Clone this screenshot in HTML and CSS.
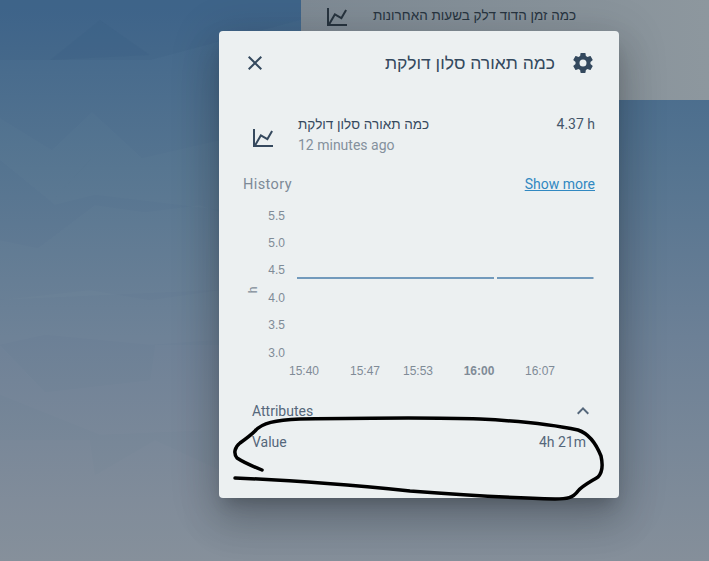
FILE: index.html
```html
<!DOCTYPE html>
<html lang="en">
<head>
<meta charset="utf-8">
<title>History dialog</title>
<link rel="stylesheet" href="styles.css">
</head>
<body>
<svg class="facets" viewBox="0 0 709 561" preserveAspectRatio="none" aria-hidden="true">
  <polygon class="f-dark" points="0,0 709,0 709,22 470,30 300,20 150,60 0,60"/>
  <polygon class="f-dark" points="50,60 100,20 150,55 90,58"/>
  <polygon class="f-light" points="0,118 52,150 92,112 142,158 220,140 220,210 95,195 55,205 0,160"/>
  <polygon class="f-dark" points="90,160 55,198 92,158"/>
  <polygon class="f-light" points="0,240 38,248 95,205 145,212 200,205 220,212 220,290 0,300"/>
  <polygon class="f-light" points="0,300 90,290 150,300 220,290 220,340 150,345 45,335 0,345"/>
  <polygon class="f-light" points="0,345 45,392 150,380 155,345 220,345 220,430 100,435 0,395"/>
  <polygon class="f-light" points="0,440 90,440 95,475 155,440 220,470 220,561 0,561"/>
</svg>
<section class="back-card">
  <svg class="icon back-icon" viewBox="0 0 24 24"><path d="M16 11.78 20.24 4.45 21.97 5.45 16.74 14.5 10.23 10.75 5.46 19H22V21H2V3H4V17.54L9.5 8Z"/></svg>
  <span class="back-title" dir="rtl">כמה זמן הדוד דלק בשעות האחרונות</span>
</section>
<main class="dialog">
  <header class="dialog-head">
    <svg class="icon close" viewBox="0 0 24 24"><path d="M19 6.41 17.59 5 12 10.59 6.41 5 5 6.41 10.59 12 5 17.59 6.41 19 12 13.41 17.59 19 19 17.59 13.41 12Z"/></svg>
    <h1 class="dialog-title" dir="rtl">כמה תאורה סלון דולקת</h1>
    <svg class="icon gear" viewBox="0 0 24 24"><path d="M12 15.5A3.5 3.5 0 0 1 8.500 12 3.500 3.500 0 0 1 12 8.500 3.500 3.500 0 0 1 15.500 12 3.500 3.500 0 0 1 12 15.500M19.430 12.970C19.470 12.650 19.500 12.330 19.500 12S19.470 11.340 19.430 11L21.540 9.370C21.730 9.220 21.780 8.950 21.660 8.730L19.660 5.270C19.540 5.050 19.270 4.960 19.050 5.050L16.560 6.050C16.040 5.660 15.500 5.320 14.870 5.070L14.500 2.420C14.460 2.180 14.250 2 14 2H10C9.750 2 9.540 2.180 9.500 2.420L9.130 5.070C8.500 5.320 7.960 5.660 7.440 6.050L4.950 5.050C4.730 4.960 4.460 5.050 4.340 5.270L2.340 8.730C2.210 8.950 2.270 9.220 2.460 9.370L4.570 11C4.530 11.340 4.500 11.670 4.500 12S4.530 12.650 4.570 12.970L2.460 14.630C2.270 14.780 2.210 15.050 2.340 15.270L4.340 18.730C4.460 18.950 4.730 19.030 4.950 18.950L7.440 17.940C7.960 18.340 8.500 18.680 9.130 18.930L9.500 21.580C9.540 21.820 9.750 22 10 22H14C14.250 22 14.460 21.820 14.500 21.580L14.870 18.930C15.500 18.670 16.040 18.340 16.560 17.940L19.050 18.950C19.270 19.030 19.540 18.950 19.660 18.730L21.660 15.270C21.780 15.050 21.730 14.780 21.540 14.630Z"/></svg>
  </header>
  <section class="state-row">
    <svg class="icon state-icon" viewBox="0 0 24 24"><path d="M16 11.78 20.240 4.450 21.970 5.450 16.740 14.500 10.230 10.750 5.460 19H22V21H2V3H4V17.540L9.500 8Z"/></svg>
    <div class="state-info">
      <div class="state-name" dir="rtl">כמה תאורה סלון דולקת</div>
      <div class="state-time">12 minutes ago</div>
    </div>
    <div class="state-value">4.37 h</div>
  </section>
  <section class="history-head">
    <span class="history-label">History</span>
    <a class="show-more" href="#">Show more</a>
  </section>
  <svg class="chart" viewBox="0 0 400 190" aria-label="History chart">
    <g class="y-labels">
      <text x="66" y="22">5.5</text>
      <text x="66" y="49">5.0</text>
      <text x="66" y="76">4.5</text>
      <text x="66" y="104">4.0</text>
      <text x="66" y="131">3.5</text>
      <text x="66" y="159">3.0</text>
    </g>
    <text class="unit" transform="translate(38 92) rotate(-90)">h</text>
    <path class="line" d="M78 80H275M278 80H374.500"/>
    <g class="x-labels">
      <text x="85" y="177">15:40</text>
      <text x="146" y="177">15:47</text>
      <text x="199" y="177">15:53</text>
      <text class="major" x="260" y="177">16:00</text>
      <text x="321" y="177">16:07</text>
    </g>
  </svg>
  <section class="attrs">
    <div class="attrs-head">
      <span>Attributes</span>
      <svg class="icon chevron" viewBox="0 0 24 24"><path d="M7.410 15.410 12 10.830 16.590 15.410 18 14 12 8 6 14Z"/></svg>
    </div>
    <div class="attr-row">
      <span>Value</span>
      <span>4h 21m</span>
    </div>
  </section>
</main>
<svg class="scribble" viewBox="0 0 709 561" aria-hidden="true">
  <path d="M262 470 C252 466 243 462 237 458 C233 453 235 447 240 443 C247 438 251 435 255 431 C262 423 275 420 300 419 C360 418 430 417 480 419 C520 421 555 425 578 430 C590 434 597 446 601 456 C603 465 602 473 598 477 C590 482 582 486 578 491 C573 498 567 499 555 499 C510 498 450 494 410 491 C370 487 310 481 235 478"/>
</svg>
</body>
</html>
```

FILE: styles.css
```css
* { box-sizing: border-box; }
html, body { margin: 0; height: 100%; }
body {
  width: 709px;
  height: 561px;
  overflow: hidden;
  position: relative;
  background: linear-gradient(180deg, #40668b 0%, #557490 30%, #6c8096 60%, #858f9a 100%);
  font-family: Roboto, "Liberation Sans", "Noto Sans", sans-serif;
  color: #36495e;
}
.facets { position: absolute; inset: 0; width: 709px; height: 561px; }
.f-dark { fill: rgba(40, 80, 110, .08); }
.f-light { fill: rgba(255, 255, 255, .015); }
.icon { fill: currentColor; display: block; flex: none; }
.back-card {
  position: absolute;
  left: 301px;
  top: 0;
  width: 408px;
  height: 100px;
  background: linear-gradient(90deg, #7e8a94, #8d979e);
  padding: 3px 0 0 24px;
  display: flex;
  align-items: flex-start;
  gap: 24px;
  color: #27343f;
}
.back-icon { width: 24px; height: 24px; margin-top: 2px; }
.back-title { font-size: 13.5px; line-height: 26px; font-family: "Liberation Sans", sans-serif; }
.dialog {
  position: absolute;
  left: 219px;
  top: 31px;
  width: 400px;
  height: 467px;
  background: #ecf0f1;
  border-radius: 4px;
  box-shadow: 0 11px 15px -7px rgba(0,0,0,.2), 0 24px 38px 3px rgba(0,0,0,.14), 0 9px 46px 8px rgba(0,0,0,.12);
  display: flex;
  flex-direction: column;
}
.dialog-head {
  display: flex;
  align-items: center;
  height: 64px;
  padding: 0 24px;
  color: #34495e;
}
.close { width: 24px; height: 24px; }
.dialog-title {
  margin: 0 0 0 32px;
  flex: 1;
  font-size: 17.5px;
  font-weight: 400;
  text-align: right;
  line-height: 24px;
  font-family: "Liberation Sans", sans-serif;
  direction: ltr;
}
.gear { width: 24px; height: 24px; margin-left: 16px; }
.state-row {
  display: flex;
  align-items: flex-start;
  margin-top: 19px;
  padding: 0 24px;
}
.state-icon { width: 24px; height: 24px; margin: 12px 0 0 8px; }
.state-info { margin-left: 23px; flex: 1; }
.state-name { font-size: 13.5px; line-height: 21px; font-family: "Liberation Sans", sans-serif; direction: ltr; text-align: left; color: #36495e; }
.state-time { font-size: 14px; line-height: 20px; color: #84919d; }
.state-value { font-size: 14px; line-height: 21px; color: #44566a; }
.history-head {
  display: flex;
  justify-content: space-between;
  align-items: baseline;
  margin-top: 21px;
  padding: 0 24px;
}
.history-label { font-size: 14.5px; letter-spacing: .4px; color: #7d8a97; }
.show-more { font-size: 14px; color: #3188c1; text-decoration: underline; }
.chart { display: block; width: 400px; height: 190px; margin-top: 5px; }
.chart text { font-family: "Liberation Sans", sans-serif; font-size: 12px; fill: #7f8b97; }
.y-labels text { text-anchor: end; }
.x-labels text { text-anchor: middle; }
.x-labels .major { font-weight: 700; }
.unit { text-anchor: middle; font-size: 11px; }
.line { fill: none; stroke: #4a7dab; stroke-width: 1.6; }
.attrs { padding: 0 33px; font-size: 14px; color: #55677b; }
.attrs-head, .attr-row { display: flex; justify-content: space-between; align-items: center; }
.attrs-head { height: 26px; margin-top: 10px; padding-right: 0; }
.chevron { width: 24px; height: 24px; margin-right: -9px; }
.attr-row { margin-top: 8px; line-height: 20px; }
.scribble { position: absolute; inset: 0; width: 709px; height: 561px; pointer-events: none; }
.scribble path { fill: none; stroke: #000; stroke-width: 3.5; stroke-linecap: round; stroke-linejoin: round; }
```
